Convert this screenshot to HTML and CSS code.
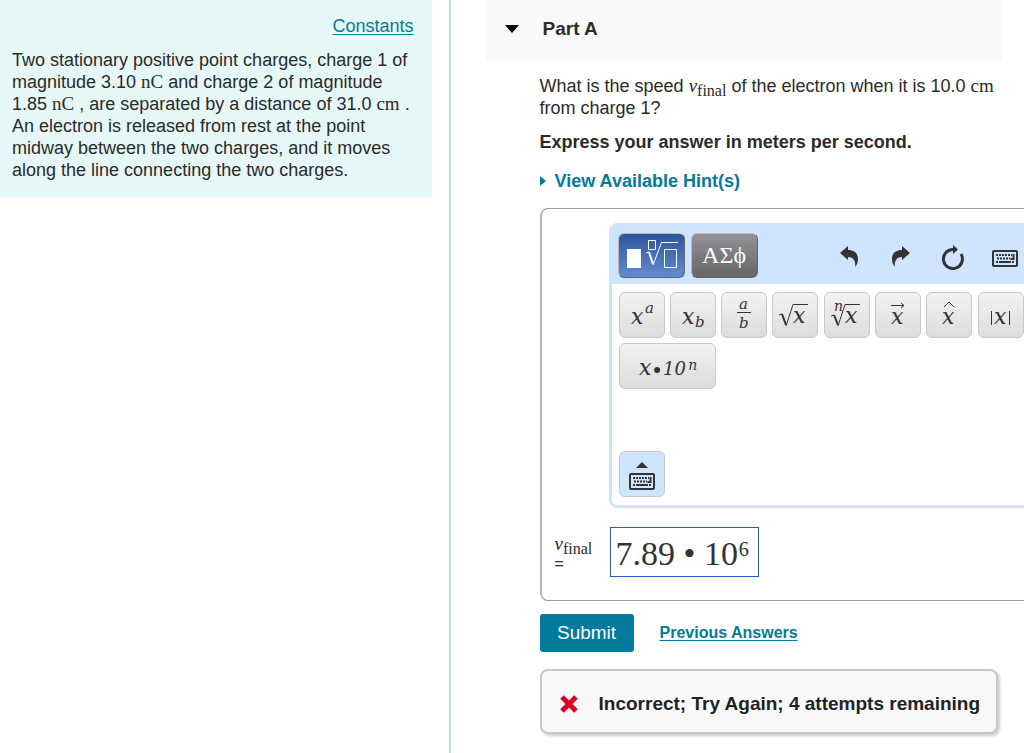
FILE: index.html
```html
<!DOCTYPE html>
<html lang="en">
<head>
    <meta charset="UTF-8">
    <meta name="viewport" content="width=device-width, initial-scale=1.0">
    <title>Part A - Point Charges</title>
    <link rel="stylesheet" href="styles.css">
</head>
<body>
    <div class="page">
        <aside class="sidebar">
            <div class="problem">
                <a class="constants" href="#">Constants</a>
                <p>Two stationary positive point charges, charge 1 of magnitude 3.10 <span class="math">nC</span> and charge 2 of magnitude 1.85 <span class="math">nC</span> , are separated by a distance of 31.0 <span class="math">cm</span> . An electron is released from rest at the point midway between the two charges, and it moves along the line connecting the two charges.</p>
            </div>
        </aside>

        <main class="content">
            <header class="part-header">
                <svg class="caret" width="14" height="8" viewBox="0 0 14 8"><path d="M0 0h14L7 8z"/></svg>
                <h1>Part A</h1>
            </header>

            <div class="part">
                <p>What is the speed <span class="math"><i>v</i><sub>final</sub></span> of the electron when it is 10.0 <span class="math">cm</span> from charge 1?</p>
                <p class="express">Express your answer in meters per second.</p>
                <a class="hints" href="#">
                    <svg width="6" height="10" viewBox="0 0 6 10"><path d="M0 0l6 5-6 5z"/></svg>
                    View Available Hint(s)
                </a>

                <div class="answer-box">
                    <div class="keypad">
                        <div class="toolbar">
                            <button class="tab tab-active" type="button" aria-label="Templates">
                                <svg width="65" height="43" viewBox="0 0 65 43">
                                    <path class="solid" d="M8 15h14v19H8z"/>
                                    <path class="line" d="M29.500 6.500h7v9h-7zM45.500 15.500h12v18h-12z"/>
                                    <path class="line" d="M27 19l3-1M34 31l8.500-22.500H59"/>
                                    <path class="thick" d="M30 18l4 12"/>
                                </svg>
                            </button>
                            <button class="tab" type="button">ΑΣϕ</button>
                            <div class="tools">
                                <button class="tool" type="button" aria-label="Undo">
                                    <svg width="20" height="22" viewBox="0 0 20 22"><path d="M1 7L9 0v4c7 0 10 4 10 9 0 3-1 6-3 8 1-5-1-10-7-10v3z"/></svg>
                                </button>
                                <button class="tool" type="button" aria-label="Redo">
                                    <svg width="20" height="22" viewBox="0 0 20 22"><path d="M19 7L11 0v4c-7 0-10 4-10 9 0 3 1 6 3 8-1-5 1-10 7-10v3z"/></svg>
                                </button>
                                <button class="tool" type="button" aria-label="Reset">
                                    <svg width="24" height="26" viewBox="0 0 24 26"><path class="ring" d="M20 10a9.500 9.500 0 1 1-8-4.500"/><path d="M12 1l5 4.500-5 4.500z"/></svg>
                                </button>
                                <button class="tool keyboard-tool" type="button" aria-label="Keyboard shortcuts">
                                    <svg width="26" height="17" viewBox="0 0 26 17">
                                        <rect class="frame" x="1" y="1" width="24" height="15" rx="1"/>
                                        <path class="dots" d="M4 5h16M5 8.500h13M4 12h2M20 12h3"/>
                                        <path class="bar" d="M7 12h12M21.500 4v5h-3"/>
                                    </svg>
                                </button>
                            </div>
                        </div>

                        <div class="keys">
                            <button class="key" type="button"><svg viewBox="0 0 44 44"><text x="11" y="31">x</text><text class="small" x="25" y="20">a</text></svg></button>
                            <button class="key" type="button"><svg viewBox="0 0 44 44"><text x="11" y="31">x</text><text class="small" x="24" y="34">b</text></svg></button>
                            <button class="key" type="button"><svg viewBox="0 0 44 44"><text class="small" x="17" y="16">a</text><path d="M15 19.500h14"/><text class="small" x="17" y="35">b</text></svg></button>
                            <button class="key" type="button"><svg viewBox="0 0 44 44"><path d="M6 22l3-1"/><path class="thick" d="M9 21l4 11"/><path d="M13 33l7-21.500h15"/><text x="20" y="30">x</text></svg></button>
                            <button class="key" type="button"><svg viewBox="0 0 44 44"><text class="index" x="9" y="18">n</text><path d="M6 23l3-1"/><path class="thick" d="M9 22l4 10"/><path d="M13 33l7-21.500h15"/><text x="20" y="30">x</text></svg></button>
                            <button class="key" type="button"><svg viewBox="0 0 44 44"><path d="M15 12.500h13M25 10l3 2.500-3 2.500"/><text x="15" y="31">x</text></svg></button>
                            <button class="key" type="button"><svg viewBox="0 0 44 44"><path d="M17 14l5-5 5 5"/><text x="15" y="31">x</text></svg></button>
                            <button class="key" type="button"><svg viewBox="0 0 44 44"><path d="M12.500 18v14M30.500 18v14"/><text x="15" y="31">x</text></svg></button>
                            <button class="key key-wide" type="button"><svg viewBox="0 0 95 44"><text x="19" y="31">x</text><circle cx="37" cy="26" r="3"/><text class="ten" x="43" y="31">10</text><text class="index" x="68" y="26">n</text></svg></button>
                        </div>

                        <button class="key key-toggle" type="button" aria-label="Toggle keyboard">
                            <svg width="12" height="6" viewBox="0 0 12 6"><path class="arrow" d="M6 0l6 6H0z"/></svg>
                            <svg width="26" height="17" viewBox="0 0 26 17">
                                <rect class="frame" x="1" y="1" width="24" height="15" rx="1"/>
                                <path class="dots" d="M4 5h16M5 8.500h13M4 12h2M20 12h3"/>
                                <path class="bar" d="M7 12h12M21.500 4v5h-3"/>
                            </svg>
                        </button>
                    </div>

                    <div class="answer-row">
                        <label for="answer"><span class="math"><i>v</i><sub>final</sub></span> =</label>
                        <input id="answer" class="answer" type="text" value="7.89 • 10⁶">
                    </div>
                </div>

                <div class="actions">
                    <button class="submit" type="submit">Submit</button>
                    <a class="previous" href="#">Previous Answers</a>
                </div>

                <div class="feedback">
                    <svg width="20" height="20" viewBox="0 0 20 20"><path d="M3 3l14 14M17 3L3 17"/></svg>
                    <strong>Incorrect; Try Again; 4 attempts remaining</strong>
                </div>
            </div>
        </main>
    </div>
</body>
</html>
```
FILE: styles.css
```css
* {
    box-sizing: border-box;
}
body {
    font-family: "Liberation Sans", Arial, sans-serif;
    font-size: 18px;
    line-height: 22px;
    background: #fff;
    color: #2b2b2b;
    margin: 0;
}
p, h1 {
    margin: 0;
}
a {
    color: #047a9c;
}
button {
    font-family: inherit;
    padding: 0;
    cursor: pointer;
}
svg {
    display: block;
}
.page {
    display: flex;
    min-height: 100vh;
    overflow: hidden;
}
.math {
    font-family: "Liberation Serif", "Times New Roman", serif;
    font-size: 19px;
    line-height: 16px;
}
.math sub {
    font-size: 16px;
    line-height: 0;
    vertical-align: -4px;
}

/* Problem statement */
.sidebar {
    flex: 0 0 44%;
    padding-right: 17px;
    border-right: 2px solid #c7d6e6;
}
.problem {
    background: #e6f7f7;
    padding: 15px 18px 16px 12px;
}
.constants {
    display: block;
    text-align: right;
    margin-bottom: 12px;
    text-underline-offset: 2px;
}

/* Question */
.content {
    flex: 1;
    min-width: 0;
    padding: 0 22px 0 35px;
}
.part-header {
    display: flex;
    align-items: center;
    height: 61px;
    gap: 24px;
    padding: 0 19px 3px;
    background: #f9f9f9;
}
.part-header h1 {
    font-size: 19px;
}
.part {
    padding: 14px 0 0 54px;
}
.express {
    font-weight: bold;
    margin-top: 12px;
}
.hints {
    display: flex;
    align-items: center;
    gap: 9px;
    margin: 17px 0 16px;
    font-weight: bold;
    text-decoration: none;
    fill: #047a9c;
}

/* Answer box is wider than the column */
.answer-box {
    width: max-content;
    padding: 14px 20px 23px 67px;
    border: 1px solid #999;
    border-left: 2px solid #b5b5b5;
    border-radius: 8px;
}
.keypad {
    border: 1px solid #ddd;
    border-radius: 8px;
    box-shadow: inset 0 0 0 2px #cfe5ff;
    padding-bottom: 10px;
    overflow: hidden;
}
.toolbar {
    display: flex;
    gap: 6px;
    height: 60px;
    padding: 9px 8px 6px;
    background: #cfe5ff;
}
.tab {
    width: 67px;
    height: 45px;
    border: 1px solid #888;
    border-color: #bbb #666 #666 #bbb;
    border-radius: 6px;
    background: linear-gradient(#92929a, #666);
    color: #fff;
    font-family: "Liberation Serif", "Times New Roman", serif;
    font-size: 24px;
}
.tab-active {
    background: linear-gradient(#2d559e, #628bd0);
}
.tab .solid {
    fill: #fff;
}
.tab .line, .tab .thick {
    fill: none;
    stroke: #fff;
}
.tab .thick {
    stroke-width: 2px;
}
.tools {
    display: flex;
    gap: 6px;
    height: 45px;
    margin-left: 62px;
}
.tool {
    display: flex;
    align-items: center;
    justify-content: center;
    width: 46px;
    padding-top: 2px;
    border: 0;
    background: none;
    fill: #333;
}
.keyboard-tool {
    padding-top: 6px;
}
.ring {
    fill: none;
    stroke: #333;
    stroke-width: 3px;
}
.frame {
    fill: none;
    stroke: #333;
    stroke-width: 2px;
}
.dots {
    fill: none;
    stroke: #333;
    stroke-width: 2px;
    stroke-dasharray: 2 1;
}
.bar {
    fill: none;
    stroke: #333;
    stroke-width: 2px;
}
.keys {
    display: grid;
    grid-template-columns: repeat(8, 46px);
    justify-content: space-between;
    row-gap: 5px;
    width: 405px;
    margin: 8px 14px 62px 9px;
}
.key {
    height: 46px;
    border: 1px solid #c8c8c8;
    border-radius: 6px;
    background: linear-gradient(#f2f2f2, #dcdcdc);
}
.key text {
    font-family: "DejaVu Serif", serif;
    font-size: 22px;
    font-style: italic;
    fill: #333;
}
.key circle {
    fill: #333;
}
.key .small {
    font-size: 15px;
}
.key .index {
    font-size: 14px;
}
.key .ten {
    font-size: 18px;
}
.keys path {
    fill: none;
    stroke: #333;
}
.keys .thick {
    stroke-width: 2px;
}
.key-wide {
    grid-column: span 2;
}
.key-toggle {
    display: flex;
    flex-direction: column;
    align-items: center;
    justify-content: center;
    gap: 5px;
    width: 46px;
    margin-left: 9px;
    padding-top: 3px;
    background: #cfe5ff;
}
.arrow {
    fill: #333;
}
.answer-row {
    display: flex;
    margin-top: 19px;
    margin-left: -54px;
}
.answer-row label {
    width: 55px;
    padding-top: 6px;
    font-size: 16px;
    line-height: 18px;
}
.answer-row .math {
    display: block;
    line-height: 22px;
}
.answer {
    width: 149px;
    height: 50px;
    padding: 3px 5px 0;
    border: 1px solid #2a5bc4;
    border-radius: 0;
    color: #333;
    font-family: "Liberation Serif", "Times New Roman", serif;
    font-size: 34px;
}

/* Submit and feedback */
.actions {
    display: flex;
    align-items: center;
    gap: 26px;
    margin: 13px 0 17px;
}
.submit {
    width: 94px;
    height: 38px;
    border: 0;
    border-radius: 3px;
    background: #047a9c;
    color: #fff;
    font-size: 19px;
}
.previous {
    font-size: 16px;
    font-weight: bold;
    text-underline-offset: 2px;
}
.feedback {
    display: flex;
    align-items: center;
    gap: 20px;
    height: 65px;
    margin-right: 4px;
    padding: 4px 17px 0;
    border: 2px solid #c8c8c8;
    border-radius: 8px;
    background: #f9f9f9;
    box-shadow: 2px 2px 3px rgba(0, 0, 0, 0.2);
    color: #222;
    font-size: 19px;
    white-space: nowrap;
}
.feedback svg {
    flex: none;
}
.feedback path {
    stroke: #db0020;
    stroke-width: 5px;
}
```
